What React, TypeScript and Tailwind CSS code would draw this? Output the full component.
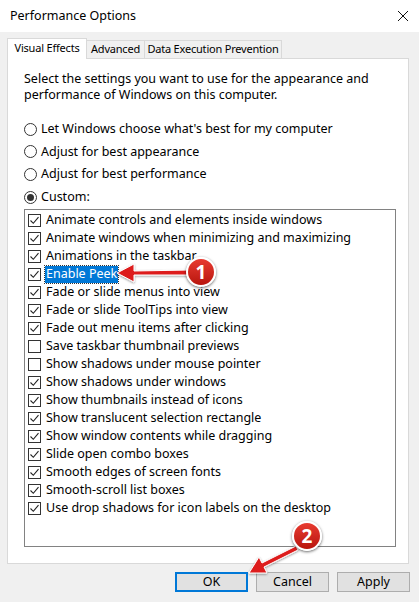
import React from "react";

const items: [string, boolean][] = [
  ["Animate controls and elements inside windows", true],
  ["Animate windows when minimizing and maximizing", true],
  ["Animations in the taskbar", true],
  ["Enable Peek", true],
  ["Fade or slide menus into view", true],
  ["Fade or slide ToolTips into view", true],
  ["Fade out menu items after clicking", true],
  ["Save taskbar thumbnail previews", false],
  ["Show shadows under mouse pointer", false],
  ["Show shadows under windows", true],
  ["Show thumbnails instead of icons", true],
  ["Show translucent selection rectangle", true],
  ["Show window contents while dragging", true],
  ["Slide open combo boxes", true],
  ["Smooth edges of screen fonts", true],
  ["Smooth-scroll list boxes", true],
  ["Use drop shadows for icon labels on the desktop", true],
];

function Check({ on }: { on: boolean }) {
  return (
    <div className="w-[13px] h-[13px] border border-[#333] bg-white flex items-center justify-center shrink-0">
      {on && (
        <svg width="11" height="11" viewBox="0 0 11 11">
          <path d="M1.5 5.5 L4.3 8.3 L9.5 2.2" fill="none" stroke="#222" strokeWidth="1.1" />
        </svg>
      )}
    </div>
  );
}

function Radio({ on, label }: { on: boolean; label: string }) {
  return (
    <div className="flex items-center h-[22.6px]">
      <div className="w-[13px] h-[13px] rounded-full border border-[#333] bg-white flex items-center justify-center shrink-0">
        {on && <div className="w-[7px] h-[7px] rounded-full bg-[#333]" />}
      </div>
      <span className="ml-[4px]">{label}</span>
    </div>
  );
}

function Badge({ n }: { n: string }) {
  return (
    <div className="w-[30px] h-[30px] rounded-full bg-gradient-to-b from-[#e83a30] to-[#b8140c] border-2 border-white shadow-[0_1px_3px_rgba(0,0,0,0.6)] flex items-center justify-center text-white font-bold text-[19px] leading-none">
      {n}
    </div>
  );
}

export default function App() {
  return (
    <div
      className="relative w-[419px] h-[602px] bg-[#f0f0f0] text-[12.5px] text-black overflow-hidden whitespace-nowrap"
      style={{ fontFamily: '"Noto Sans", "Open Sans", sans-serif' }}
    >
      <div className="h-[32px] bg-white flex items-center justify-between pl-[10px] pr-[8px]">
        <span className="text-[12.5px]">Performance Options</span>
        <svg width="12" height="12" viewBox="0 0 12 12" className="mr-[2px]">
          <path d="M1 1 L11 11 M11 1 L1 11" stroke="#111" strokeWidth="1" />
        </svg>
      </div>
      <div className="flex items-end ml-[7px] mt-[6px] h-[21px] relative z-10 text-[11px] tracking-[-0.2px]">
        <div className="shrink-0 w-[80px] h-[21px] bg-white border border-[#d9d9d9] border-b-0 flex items-center justify-center pb-[2px]">
          Visual Effects
        </div>
        <div className="shrink-0 w-[58px] h-[19px] bg-[#f0f0f0] border border-[#d9d9d9] border-l-0 flex items-center justify-center">
          Advanced
        </div>
        <div className="shrink-0 w-[137px] h-[19px] bg-[#f0f0f0] border border-[#d9d9d9] border-l-0 flex items-center justify-center">
          Data Execution Prevention
        </div>
      </div>
      <div className="ml-[7px] w-[402px] h-[506px] bg-white border border-[#d9d9d9] -mt-[1px] pl-[16px] pt-[12px]">
        <div className="leading-[16px]">
          Select the settings you want to use for the appearance and
          <br />
          performance of Windows on this computer.
        </div>
        <div className="mt-[15px]">
          <Radio on={false} label="Let Windows choose what's best for my computer" />
          <Radio on={false} label="Adjust for best appearance" />
          <Radio on={false} label="Adjust for best performance" />
          <Radio on={true} label="Custom:" />
        </div>
        <div className="mt-[1px] w-[372px] h-[338px] border border-[#828282] pt-[1px] pl-[3px]">
          {items.map(([t, on], i) => (
            <div key={i} className="flex items-center h-[18px]">
              <Check on={on} />
              {t === "Enable Peek" ? (
                <span className="ml-[4px] px-[1px] h-[17px] leading-[16px] bg-[#0078d7] text-white outline outline-1 outline-dotted outline-[#333]">
                  {t}
                </span>
              ) : (
                <span className="ml-[5px]">{t}</span>
              )}
            </div>
          ))}
        </div>
      </div>
      <div className="flex justify-end gap-[8px] pr-[9px] mt-[8px]">
        <div className="w-[73px] h-[20px] bg-[#e1e1e1] border-2 border-[#0078d7] flex items-center justify-center">
          OK
        </div>
        <div className="w-[73px] h-[20px] bg-[#e1e1e1] border border-[#adadad] flex items-center justify-center">
          Cancel
        </div>
        <div className="w-[73px] h-[20px] bg-[#e1e1e1] border border-[#adadad] flex items-center justify-center">
          Apply
        </div>
      </div>

      {/* annotations */}
      <svg className="absolute left-0 top-0 pointer-events-none" width="419" height="602">
        <defs>
          <filter id="sh" x="-20%" y="-20%" width="140%" height="140%">
            <feDropShadow dx="0" dy="1" stdDeviation="1" floodColor="#000" floodOpacity="0.4" />
          </filter>
        </defs>
        <g filter="url(#sh)">
          <path d="M190 270 L134 271 L134 264 L117 273 L134 282 L134 275 L190 275 Z" fill="#dd1f1f" stroke="#fff" strokeWidth="1" />
          <path d="M296 546 L262 563 L259 557 L249 573 L267 573 L264 567 L298 550 Z" fill="#dd1f1f" stroke="#fff" strokeWidth="1" />
        </g>
      </svg>
      <div className="absolute left-[186px] top-[257px]">
        <Badge n="1" />
      </div>
      <div className="absolute left-[292px] top-[521px]">
        <Badge n="2" />
      </div>
    </div>
  );
}
